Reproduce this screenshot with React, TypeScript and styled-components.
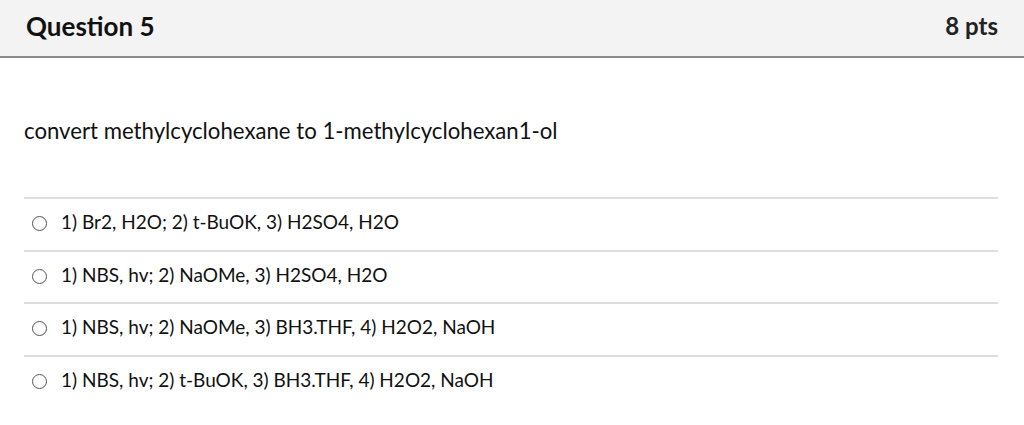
import React from "react";
import styled, { createGlobalStyle } from "styled-components";

const Global = createGlobalStyle`
  html, body { margin: 0; padding: 0; background: #fff; }
  body { font-family: Lato, "Open Sans", sans-serif; color: #2d3b45; }
`;

const Page = styled.div`
  width: 1024px;
  height: 425px;
  overflow: hidden;
  background: #fff;
`;

const Header = styled.div`
  height: 58px;
  background: #f3f3f3;
  border-bottom: 2px solid #8b8b8b;
  display: flex;
  align-items: center;
  justify-content: space-between;
  padding: 0 26px 5px 26px;
  box-sizing: border-box;
`;

const Title = styled.h2`
  margin: 0;
  font-size: 26px;
  font-weight: 700;
  color: #111;
`;

const Points = styled.div`
  font-size: 24px;
  font-weight: 700;
  color: #222;
`;

const Body = styled.div`
  padding: 0 26px 0 24px;
`;

const Prompt = styled.p`
  margin: 60px 0 0;
  font-size: 22.2px;
  line-height: 26px;
  color: #111;
`;

const Answers = styled.div`
  margin-top: 53px;
  display: flex;
  flex-direction: column;
`;

const Answer = styled.label`
  display: flex;
  align-items: center;
  height: 52.5px;
  border-top: 2px solid #dedede;
  box-sizing: border-box;
  padding: 0 0 5px 8px;
  gap: 14px;
  font-size: 19px;
  color: #111;
`;

const Radio = styled.span`
  width: 15px;
  height: 15px;
  box-sizing: border-box;
  border: 1.5px solid #555;
  border-radius: 50%;
  flex: none;
  margin-top: 4px;
`;

const options = [
  "1) Br2, H2O; 2) t-BuOK, 3) H2SO4, H2O",
  "1) NBS, hv; 2) NaOMe, 3) H2SO4, H2O",
  "1) NBS, hv; 2) NaOMe, 3) BH3.THF, 4) H2O2, NaOH",
  "1) NBS, hv; 2) t-BuOK, 3) BH3.THF, 4) H2O2, NaOH",
];

export default function App() {
  return (
    <Page>
      <Global />
      <Header>
        <Title>Question 5</Title>
        <Points>8 pts</Points>
      </Header>
      <Body>
        <Prompt>convert methylcyclohexane to 1-methylcyclohexan1-ol</Prompt>
        <Answers>
          {options.map((o) => (
            <Answer key={o}>
              <Radio />
              <span>{o}</span>
            </Answer>
          ))}
        </Answers>
      </Body>
    </Page>
  );
}
